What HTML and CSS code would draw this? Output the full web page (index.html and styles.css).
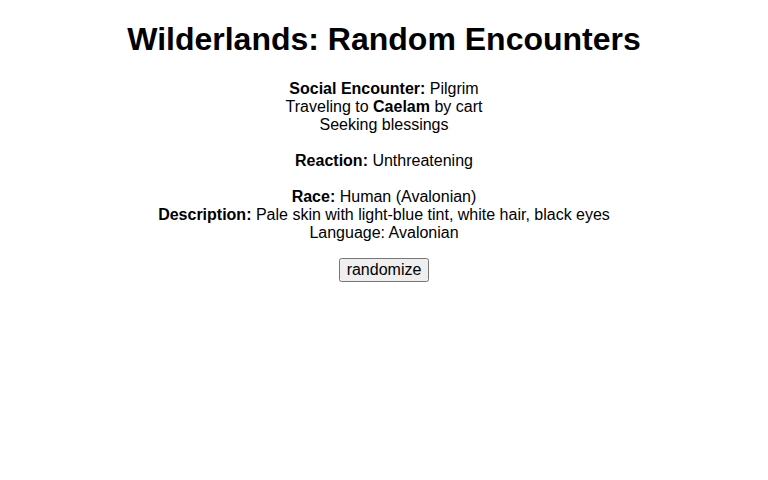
FILE: index.html
```html
<!DOCTYPE html>
<html lang="en">
  <head>
    <meta charset="UTF-8" />
    <meta name="viewport" content="width=device-width, initial-scale=1.0" />
    <title>Wilderlands: Random Encounters</title>
    <link rel="stylesheet" href="styles.css">
  </head>
  <body>
    <h1>Wilderlands: Random Encounters</h1>

    <div class="encounter">
      <div><b>Social Encounter:</b> Pilgrim</div>
      <div>Traveling to <b>Caelam</b> by cart</div>
      <div>Seeking blessings</div>
      <br>
      <div><b>Reaction:</b> Unthreatening</div>
      <br>
      <div><b>Race:</b> Human (Avalonian)</div>
      <div><b>Description:</b> Pale skin with light-blue tint, white hair, black eyes</div>
      <div>Language: Avalonian</div>
    </div>

    <div class="actions">
      <button class="randomize">randomize</button>
    </div>
  </body>
</html>
```

FILE: styles.css
```css
body {
  font-family: "Liberation Sans", Arial, sans-serif;
  font-size: 16px;
  color: #000;
  background: #fff;
  text-align: center;
}
h1 {
  font-size: 32px;
  margin: 13px 0 22px;
}
.actions {
  margin-top: 16px;
}
.randomize {
  font-family: "Liberation Sans", Arial, sans-serif;
  font-size: 16px;
}
```
